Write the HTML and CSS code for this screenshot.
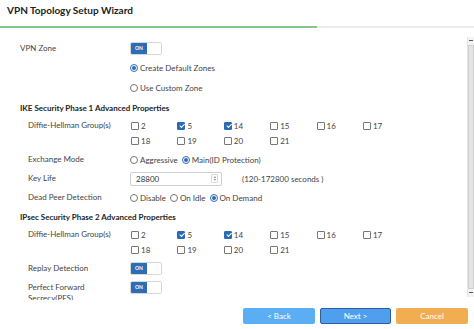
FILE: index.html
```html
<!DOCTYPE html>
<html lang="en">

<head>
    <meta charset="UTF-8">
    <meta name="viewport" content="width=device-width, initial-scale=1.0">
    <title>VPN Topology Setup Wizard</title>
    <link rel="stylesheet" href="styles.css">
</head>

<body>
    <div class="wizard">
        <div class="title">VPN Topology Setup Wizard</div>
        <div class="progress">
            <div class="done"></div>
            <div class="todo"></div>
        </div>

        <div class="body">
            <div class="content">
                <div class="row tall top">
                    <div class="label">VPN Zone</div>
                    <div class="toggle"><span class="on">ON</span><span class="off"></span></div>
                </div>
                <div class="row tall top">
                    <div class="label"></div>
                    <label class="opt"><span class="radio checked"></span>Create Default Zones</label>
                </div>
                <div class="row tall top">
                    <div class="label"></div>
                    <label class="opt"><span class="radio"></span>Use Custom Zone</label>
                </div>

                <div class="row head">IKE Security Phase 1 Advanced Properties</div>
                <div class="row groups">
                    <div class="label">Diffie-Hellman Group(s)</div>
                    <div class="checks">
                        <label class="opt"><span class="box"></span>2</label>
                        <label class="opt"><span class="box checked"></span>5</label>
                        <label class="opt"><span class="box checked"></span>14</label>
                        <label class="opt"><span class="box"></span>15</label>
                        <label class="opt"><span class="box"></span>16</label>
                        <label class="opt"><span class="box"></span>17</label>
                        <label class="opt"><span class="box"></span>18</label>
                        <label class="opt"><span class="box"></span>19</label>
                        <label class="opt"><span class="box"></span>20</label>
                        <label class="opt"><span class="box"></span>21</label>
                    </div>
                </div>
                <div class="row">
                    <div class="label">Exchange Mode</div>
                    <div class="radios">
                        <label class="opt"><span class="radio"></span>Aggressive</label>
                        <label class="opt"><span class="radio checked"></span>Main(ID Protection)</label>
                    </div>
                </div>
                <div class="row">
                    <div class="label">Key Life</div>
                    <div class="field">
                        <span class="value">28800</span>
                        <span class="spin"><i class="up"></i><i class="down"></i></span>
                    </div>
                    <span class="hint">(120-172800 seconds )</span>
                </div>
                <div class="row">
                    <div class="label">Dead Peer Detection</div>
                    <div class="radios">
                        <label class="opt"><span class="radio"></span>Disable</label>
                        <label class="opt"><span class="radio"></span>On Idle</label>
                        <label class="opt"><span class="radio checked"></span>On Demand</label>
                    </div>
                </div>

                <div class="row head">IPsec Security Phase 2 Advanced Properties</div>
                <div class="row groups">
                    <div class="label">Diffie-Hellman Group(s)</div>
                    <div class="checks">
                        <label class="opt"><span class="box"></span>2</label>
                        <label class="opt"><span class="box checked"></span>5</label>
                        <label class="opt"><span class="box checked"></span>14</label>
                        <label class="opt"><span class="box"></span>15</label>
                        <label class="opt"><span class="box"></span>16</label>
                        <label class="opt"><span class="box"></span>17</label>
                        <label class="opt"><span class="box"></span>18</label>
                        <label class="opt"><span class="box"></span>19</label>
                        <label class="opt"><span class="box"></span>20</label>
                        <label class="opt"><span class="box"></span>21</label>
                    </div>
                </div>
                <div class="row">
                    <div class="label">Replay Detection</div>
                    <div class="toggle"><span class="on">ON</span><span class="off"></span></div>
                </div>
                <div class="row pfs">
                    <div class="label">Perfect Forward Secrecy(PFS)</div>
                    <div class="toggle"><span class="on">ON</span><span class="off"></span></div>
                </div>
            </div>
            <div class="scrollbar">
                <div class="arrow"></div>
                <div class="thumb"></div>
                <div class="arrow"></div>
            </div>
        </div>

        <div class="footer">
            <button class="btn back">&lt; Back</button>
            <button class="btn next">Next &gt;</button>
            <button class="btn cancel">Cancel</button>
        </div>
    </div>
</body>

</html>
```

FILE: styles.css
```css
* {
    box-sizing: border-box;
}

body {
    margin: 0;
    background-color: white;
    font-family: Lato, "Open Sans", sans-serif;
    font-size: 8px;
    color: #444;
}

.wizard {
    width: 474px;
    height: 329px;
    overflow: hidden;
}

.title {
    height: 26px;
    padding: 3px 0 0 7px;
    font-size: 10px;
    font-weight: bold;
    color: #222;
    line-height: 14px;
}

.progress {
    display: flex;
    height: 2px;
}

.progress .done {
    width: 317px;
    background-color: #86c689;
}

.progress .todo {
    flex: 1;
    background-color: #ececec;
}

.body {
    display: flex;
    margin-top: 9px;
    height: 263px;
}

.content {
    flex: 1;
    overflow: hidden;
    padding: 1px 0 0 20px;
}

.row {
    display: flex;
    align-items: center;
    height: 19px;
    padding-left: 8px;
}

.row.tall {
    height: 20px;
}

.row.top {
    padding-left: 0;
}

.row.top .label {
    width: 110px;
}

.label {
    width: 102px;
    flex-shrink: 0;
    line-height: 11px;
}

.row.head {
    padding-left: 0;
    font-weight: bold;
    color: #222;
}

.row.groups {
    height: 33px;
    padding-top: 1px;
    align-items: flex-start;
}

.row.groups .label {
    line-height: 15px;
}

.checks {
    display: grid;
    grid-template-columns: repeat(6, 46.4px);
    grid-auto-rows: 15px;
    padding-left: 1px;
}

.opt {
    display: flex;
    align-items: center;
    white-space: nowrap;
}

.radios {
    display: flex;
    gap: 4px;
}

.box {
    width: 8px;
    height: 8px;
    margin-right: 2px;
    border: 1px solid #777;
    border-radius: 1px;
    background-color: white;
    position: relative;
}

.box.checked {
    border-color: #2c6bb4;
    background-color: #2c6bb4;
}

.box.checked::after {
    content: "";
    position: absolute;
    left: 1px;
    top: 0px;
    width: 4px;
    height: 2px;
    border-left: 1.3px solid white;
    border-bottom: 1.3px solid white;
    transform: rotate(-45deg) translate(0px, 1px);
}

.radio {
    width: 8px;
    height: 8px;
    margin-right: 2px;
    border: 1px solid #777;
    border-radius: 50%;
    position: relative;
}

.radio.checked {
    border-color: #2c6bb4;
}

.radio.checked::after {
    content: "";
    position: absolute;
    left: 1px;
    top: 1px;
    width: 4px;
    height: 4px;
    border-radius: 50%;
    background-color: #2c6bb4;
}

.toggle {
    display: flex;
    width: 32px;
    height: 13px;
    border: 1px solid #d6d6d6;
    border-radius: 2px;
    overflow: hidden;
}

.toggle .on {
    width: 16px;
    background-color: #2d6db6;
    color: white;
    font-size: 5px;
    font-weight: bold;
    line-height: 11px;
    text-align: center;
}

.toggle .off {
    flex: 1;
    background-color: white;
}

.field {
    display: flex;
    align-items: center;
    justify-content: space-between;
    width: 92px;
    height: 14px;
    padding: 0 3px 0 5px;
    border: 1px solid #cfcfcf;
    border-radius: 2px;
    color: #333;
}

.spin {
    display: flex;
    flex-direction: column;
    justify-content: center;
    gap: 1px;
    width: 7px;
    height: 9px;
    border: 1px solid #d8d8d8;
    border-radius: 1px;
    align-items: center;
}

.spin i {
    width: 0;
    height: 0;
    border-left: 1.5px solid transparent;
    border-right: 1.5px solid transparent;
}

.spin .up {
    border-bottom: 2px solid #888;
}

.spin .down {
    border-top: 2px solid #888;
}

.hint {
    margin-left: 20px;
}

.row.pfs {
    align-items: flex-start;
    padding-top: 4px;
}

.row.pfs .label {
    width: 92px;
    margin-right: 10px;
}

.row.pfs .toggle {
    margin-top: -1px;
}

.scrollbar {
    display: flex;
    flex-direction: column;
    width: 7px;
    height: 260px;
    background-color: #f3f3f3;
    border-left: 1px solid #e2e2e2;
}

.scrollbar .arrow {
    height: 8px;
    position: relative;
}

.scrollbar .arrow::after {
    content: "";
    position: absolute;
    left: 1px;
    top: 3px;
    width: 4px;
    height: 1px;
    background-color: #555;
}

.scrollbar .thumb {
    flex: 1;
    background-color: #e4e4e4;
    border: 1px solid #d0d0d0;
}

.footer {
    display: flex;
    justify-content: flex-end;
    gap: 5px;
    padding: 8px 6px 0 0;
}

.btn {
    width: 72px;
    height: 16px;
    border: 1px solid transparent;
    border-radius: 2px;
    color: white;
    font-family: Lato, "Open Sans", sans-serif;
    font-size: 8px;
}

.btn.back {
    background-color: #5caef4;
}

.btn.next {
    width: 71px;
    background-color: #4f9fee;
    border-color: #2e5f9f;
}

.btn.cancel {
    background-color: #f1ad4f;
}
```
